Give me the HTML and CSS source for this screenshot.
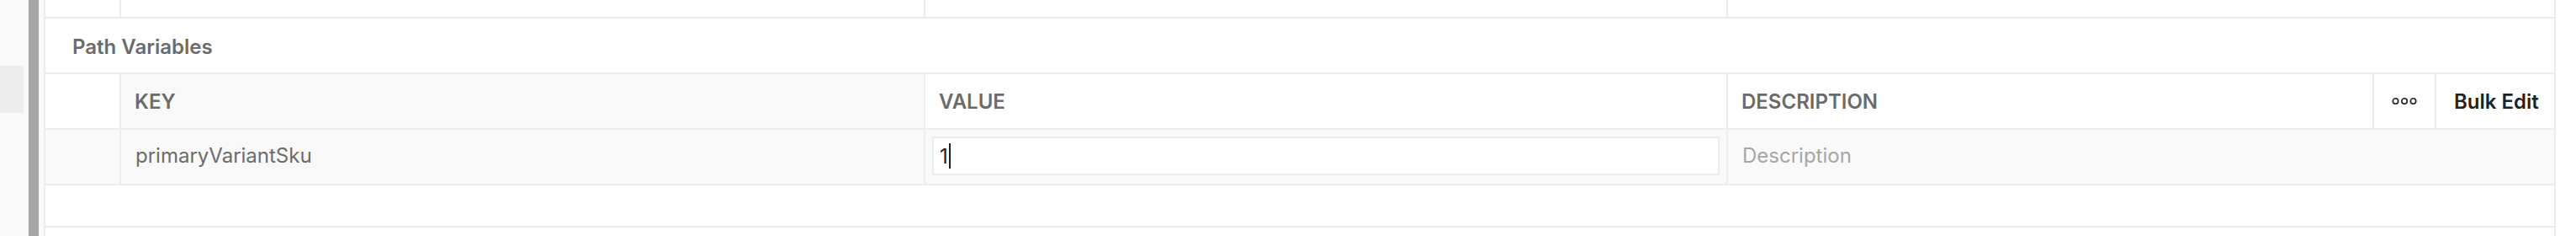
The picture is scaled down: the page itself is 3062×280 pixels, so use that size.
FILE: index.html
```html
<!DOCTYPE html>
<html lang="en">
<head>
<meta charset="utf-8">
<title>Path Variables</title>
<link rel="stylesheet" href="styles.css">
</head>
<body>
<div class="page">
  <aside class="sidebar">
    <div class="sidebar-item"></div>
  </aside>
  <div class="scrollbar"></div>
  <div class="gutter"></div>
  <main class="params">
    <div class="grid">
      <!-- tail of previous table -->
      <div class="cell prev"></div>
      <div class="cell prev"></div>
      <div class="cell prev"></div>
      <div class="cell prev span-rest"></div>

      <div class="cell title">Path Variables</div>

      <div class="cell head check"></div>
      <div class="cell head key-head">KEY</div>
      <div class="cell head">VALUE</div>
      <div class="cell head">DESCRIPTION</div>
      <div class="cell head more">
        <svg width="30" height="10" viewBox="0 0 30 10" aria-hidden="true">
          <circle cx="4.5" cy="5" r="3.2" fill="none" stroke="#212121" stroke-width="1.6"/>
          <circle cx="15" cy="5" r="3.2" fill="none" stroke="#212121" stroke-width="1.6"/>
          <circle cx="25.5" cy="5" r="3.2" fill="none" stroke="#212121" stroke-width="1.6"/>
        </svg>
      </div>
      <div class="cell head bulk">Bulk Edit</div>

      <div class="cell row check"></div>
      <div class="cell row key">primaryVariantSku</div>
      <div class="cell row value">
        <div class="field" role="textbox">1<span class="caret"></span></div>
      </div>
      <div class="cell row desc span-rest">Description</div>

      <div class="cell empty"></div>
      <div class="cell tail"></div>
    </div>
  </main>
  <div class="right-space"></div>
</div>
</body>
</html>
```

FILE: styles.css
```css
html, body {
  margin: 0;
  padding: 0;
  background: #ffffff;
}

body {
  font-family: Inter, "Noto Sans", "Liberation Sans", sans-serif;
  -webkit-font-smoothing: antialiased;
}

.page {
  display: flex;
  height: 280px;
  overflow: hidden;
}

.sidebar {
  width: 34px;
  flex: none;
  background: #f9f9f9;
  padding-top: 78px;
  box-sizing: border-box;
}

.sidebar-item {
  width: 28px;
  height: 56px;
  background: #ededed;
}

.scrollbar {
  width: 12px;
  flex: none;
  background: #a6a6a6;
}

.gutter {
  width: 6px;
  flex: none;
  background: #f9f9f9;
}

.params {
  flex: none;
  width: 2986px;
  background: #ffffff;
  border-left: 2px solid #ededed;
}

.right-space {
  flex: 1;
  background: #ffffff;
}

.grid {
  display: grid;
  grid-template-columns: 90px 956px 954px 768px 74px 142px;
}

.cell {
  box-sizing: border-box;
  border-right: 2px solid #ededed;
  border-bottom: 2px solid #ededed;
  display: flex;
  align-items: center;
  font-size: 24px;
  color: #6b6b6b;
}

.prev {
  height: 22px;
}

.span-rest {
  grid-column: 4 / -1;
}

.title {
  grid-column: 1 / -1;
  height: 66px;
  padding-left: 32px;
  padding-top: 2px;
  font-weight: 600;
}

.head {
  height: 66px;
  padding-left: 16px;
  font-weight: 600;
  background: #ffffff;
}

.head.check {
  padding-left: 0;
}

.key-head {
  background: #f9f9f9;
}

.more {
  padding-left: 0;
  justify-content: center;
}

.more svg {
  display: block;
}

.bulk {
  color: #212121;
  padding-left: 21px;
}

.row {
  height: 66px;
  background: #f9f9f9;
  padding-left: 17px;
  padding-bottom: 3px;
}

.row.check {
  padding-left: 0;
}

.key {
  font-weight: 400;
}

.value {
  padding: 8px 8px 10px 8px;
  align-items: stretch;
}

.field {
  flex: 1;
  box-sizing: border-box;
  background: #ffffff;
  border: 2px solid #ededed;
  padding-left: 7px;
  display: flex;
  align-items: center;
  color: #212121;
  font-size: 24px;
}

.caret {
  display: inline-block;
  width: 2px;
  height: 30px;
  margin-left: 1px;
  background: #212121;
}

.desc {
  color: #a6a6a6;
}

.empty {
  grid-column: 1 / -1;
  height: 50px;
}

.tail {
  grid-column: 1 / -1;
  height: 10px;
  border-bottom: none;
}
```
